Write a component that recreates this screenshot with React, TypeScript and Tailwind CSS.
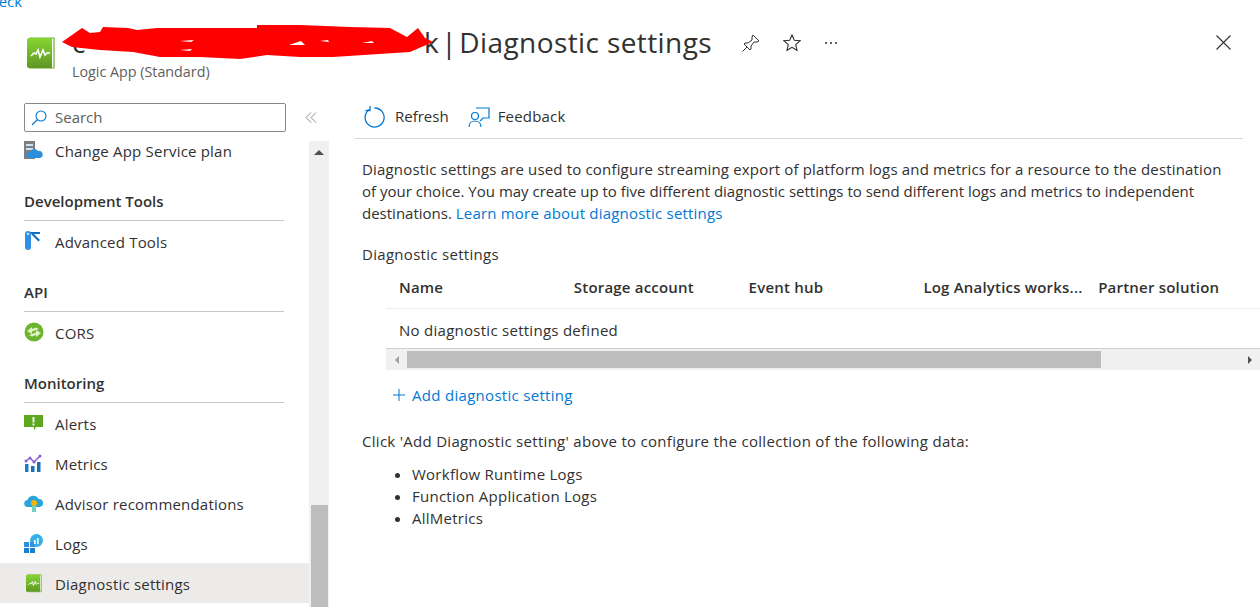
import React from 'react';

const font = { fontFamily: '"Open Sans", "Noto Sans", sans-serif' };

function BookIcon({ small }: { small?: boolean }) {
  return (
    <svg width={small ? 16 : 28} height={small ? 19 : 33} viewBox="0 0 28 33">
      <defs>
        <linearGradient id={small ? 'bookS' : 'bookL'} x1="0" y1="0" x2="0" y2="1">
          <stop offset="0" stopColor="#86d633" />
          <stop offset="1" stopColor="#5e9624" />
        </linearGradient>
      </defs>
      <path d="M3 1h24v30H3z" fill="#fff" stroke="#6fae2c" strokeWidth="1.2" />
      <path d="M0 3a2 2 0 0 1 2-2h23v30H2a2 2 0 0 1-2-2z" fill={`url(#${small ? 'bookS' : 'bookL'})`} />
      <path d="M4 19l3-3 2 1 2-4 2 7 3-7 2 5 2-2h3" fill="none" stroke="#fff" strokeWidth="1.6" />
    </svg>
  );
}

function PlanIcon() {
  return (
    <svg width="19" height="18" viewBox="0 0 19 18">
      <rect x="0" y="0" width="11" height="18" fill="#7a7f85" />
      <rect x="2" y="3" width="7" height="2" fill="#cfe3f5" />
      <rect x="2" y="7" width="7" height="2" fill="#cfe3f5" />
      <path d="M5 17a3 3 0 0 1 1-6 4.500 4.500 0 0 1 8-1 3.600 3.600 0 0 1 2 7z" fill="#2b8fdc" />
    </svg>
  );
}

function ToolsIcon() {
  return (
    <svg width="17" height="20" viewBox="0 0 17 20">
      <rect x="1" y="0" width="6" height="19" rx="3" fill="#2f8fe6" />
      <circle cx="4" cy="3" r="1.300" fill="#bfe0fa" />
      <path d="M6 1h10v2H10l6 6-1.500 1.500L8 4z" fill="#0f6fc6" />
    </svg>
  );
}

function CorsIcon() {
  return (
    <svg width="20" height="20" viewBox="0 0 20 20">
      <circle cx="10" cy="10" r="9.500" fill="#6bb52f" />
      <path d="M3 9l5-4v2l4-1.500L15 7l-7 2.500V12z" fill="#dff2c8" />
      <path d="M17 11l-5 4v-2l-4 1.500L5 13l7-2.500V8z" fill="#dff2c8" />
    </svg>
  );
}

function AlertIcon() {
  return (
    <svg width="19" height="16" viewBox="0 0 19 16">
      <path d="M0 0h19v12h-7l-2 3.500V12H0z" fill="#5ea821" />
      <rect x="8.500" y="2" width="2" height="5.500" fill="#e9f5dc" />
      <rect x="8.500" y="8.500" width="2" height="2" fill="#e9f5dc" />
    </svg>
  );
}

function MetricsIcon() {
  return (
    <svg width="18" height="18" viewBox="0 0 18 18">
      <rect x="1" y="10" width="3.500" height="8" fill="#1b7fc4" />
      <rect x="7" y="12" width="3.500" height="6" fill="#1b6fb4" />
      <rect x="13" y="8" width="3.500" height="10" fill="#1b6fb4" />
      <path d="M2 7l4-3 4 4 6-6" fill="none" stroke="#8a5fd6" strokeWidth="1.500" />
      <circle cx="2" cy="7" r="1.500" fill="#8a5fd6" />
      <circle cx="6" cy="4" r="1.500" fill="#8a5fd6" />
      <circle cx="10" cy="8" r="1.500" fill="#8a5fd6" />
      <circle cx="16" cy="2" r="1.500" fill="#8a5fd6" />
    </svg>
  );
}

function AdvisorIcon() {
  return (
    <svg width="19" height="17" viewBox="0 0 19 17">
      <path d="M4 12a3.500 3.500 0 0 1-.5-7 6 6 0 0 1 11-1 4 4 0 0 1 1 8z" fill="#2aa5dc" />
      <rect x="8" y="11" width="4" height="6" fill="#6fd0c4" />
      <circle cx="10" cy="8" r="3" fill="#f5b400" />
    </svg>
  );
}

function LogsIcon() {
  return (
    <svg width="19" height="19" viewBox="0 0 19 19">
      <rect x="0" y="8" width="5" height="5" fill="#2f8fe0" />
      <rect x="0" y="14" width="5" height="5" fill="#1b7fd0" />
      <rect x="6" y="14" width="5" height="5" fill="#1b7fd0" />
      <circle cx="12.500" cy="6.500" r="6.500" fill="#35b0e6" />
      <rect x="6" y="8" width="5" height="5" fill="#2f8fe0" />
      <rect x="10" y="6" width="1.600" height="4" fill="#fff" />
      <rect x="13" y="4" width="1.600" height="6" fill="#fff" />
    </svg>
  );
}

function NavItem({ icon, label, active }: { icon: React.ReactNode; label: string; active?: boolean }) {
  return (
    <div className={`flex items-center h-10 pl-6 ${active ? 'bg-[#edebe9]' : ''}`}>
      <span className="w-[31px] flex items-center">{icon}</span>
      <span className="text-[15px] tracking-[0.2px] text-[#323130] pt-[2px]">{label}</span>
    </div>
  );
}

function NavHeading({ label }: { label: string }) {
  return (
    <div className="mx-6 w-[260px] h-[29px] border-b border-[#c8c6c4] text-[15px] font-semibold text-[#323130] leading-[18px] mt-[22px]">
      {label}
    </div>
  );
}

export default function App() {
  const columns = ['Name', 'Storage account', 'Event hub', 'Log Analytics works...', 'Partner solution'];

  return (
    <div className="w-[1260px] h-[607px] overflow-hidden bg-white flex flex-col text-[#323130]" style={font}>
      {/* cut-off link from the blade behind */}
      <div className="h-2.5 overflow-hidden">
        <div className="-ml-[20px] -mt-[9px] text-[15px] leading-5 text-[#0078d4]">Check</div>
      </div>

      <div className="h-[90px] flex">
        <div className="pl-[27px] pt-[27px]">
          <BookIcon />
        </div>
        <div className="pl-[17px] pt-[13px] w-[1150px]">
          <div className="relative flex items-center h-[40px]">
            <span className="text-[28px] tracking-[0.4px] text-[#323130] w-[352px] -mt-[3px]">c</span>
            <span className="text-[28px] tracking-[0.4px] text-[#323130] w-[288px] whitespace-nowrap flex -mt-[3px]">
              <span className="w-[18px]">k</span>
              <span className="w-[15px]">|</span>
              <span className="ml-[3px]">Diagnostic settings</span>
            </span>
            <svg className="absolute -left-[10px] top-[2px]" width="375" height="34" viewBox="0 0 375 34">
              <path
                d="M0 17L20 3l8 5 10-1 3-5 25 1 9 2 20-2 100 0 0-3 43 0 50 2 40 1 17 9 11-9 7 10 8 4-23 10-77 5-33 0-33-2-27 4-40-2-40 0-27-5-33-2-28-3z"
                fill="#ff0000"
              />
              <path d="M118 16l14-1-3 2zM118 25l12-1-2 2zM227 20l12-4 4 4zM258 16l8-1 1 2zM300 18l10-2 2 2z" fill="#ffffff" />
            </svg>
            <span className="flex items-center gap-[22px] pl-[29px]">
              <svg width="20" height="20" viewBox="0 0 20 20" fill="none" stroke="#323130" strokeWidth="1">
                <path d="M12 2l6 6-2 1-3 0-3 4v3l-1 1-6-6 1-1h3l4-3V4z" />
                <path d="M6 14l-4.500 4.500" />
              </svg>
              <svg width="18" height="18" viewBox="0 0 18 18" fill="none" stroke="#323130" strokeWidth="1.100">
                <path d="M9 1l2.300 5.300 5.700.5-4.300 3.800 1.300 5.700L9 13.300l-5 3 1.300-5.700L1 6.800l5.700-.5z" />
              </svg>
              <span className="flex gap-[3px] pl-[2px]">
                <i className="w-[2px] h-[2px] bg-[#605e5c]" />
                <i className="w-[2px] h-[2px] bg-[#605e5c]" />
                <i className="w-[2px] h-[2px] bg-[#605e5c]" />
              </span>
            </span>
            <svg className="absolute left-[1144px] top-[12px]" width="15" height="15" viewBox="0 0 15 15" stroke="#323130" strokeWidth="1.100">
              <path d="M0.500 0.500l14 14M14.500 0.500l-14 14" />
            </svg>
          </div>
          <div className="text-[14.300px] leading-[20px] text-[#605e5c] -mt-[1px]">Logic App (Standard)</div>
        </div>
      </div>

      <div className="flex flex-1 min-h-0">
        <aside className="w-[329px] shrink-0 flex flex-col">
          <div className="h-[41px] flex items-start pl-6 pt-[3px] shrink-0">
            <div className="w-[262px] h-[29px] border border-[#8a8886] rounded-[2px] flex items-center pl-[6px]">
              <svg width="16" height="16" viewBox="0 0 16 16" fill="none" stroke="#0078d4" strokeWidth="1.100">
                <circle cx="10" cy="6" r="5" />
                <path d="M6.500 9.500L1 15" />
              </svg>
              <span className="ml-[8px] -mt-[1px] text-[15px] text-[#605e5c]">Search</span>
            </div>
            <svg className="ml-[19px] mt-[9px]" width="12" height="11" viewBox="0 0 12 11" fill="none" stroke="#8a8886" strokeWidth="1">
              <path d="M6 0.500l-5 5 5 5M11 0.500l-5 5 5 5" />
            </svg>
          </div>
          <div className="flex flex-1 min-h-0">
            <nav className="w-[309px] shrink-0 overflow-hidden -mt-[10px]">
              <div className="-mt-px">
                <NavItem icon={<PlanIcon />} label="Change App Service plan" />
              </div>
              <NavHeading label="Development Tools" />
              <NavItem icon={<ToolsIcon />} label="Advanced Tools" />
              <NavHeading label="API" />
              <NavItem icon={<CorsIcon />} label="CORS" />
              <NavHeading label="Monitoring" />
              <NavItem icon={<AlertIcon />} label="Alerts" />
              <NavItem icon={<MetricsIcon />} label="Metrics" />
              <NavItem icon={<AdvisorIcon />} label="Advisor recommendations" />
              <NavItem icon={<LogsIcon />} label="Logs" />
              <NavItem icon={<span className="pl-[2px] flex"><BookIcon small /></span>} label="Diagnostic settings" active />
            </nav>
            <div className="w-[20px] bg-[#f0f0f0] flex flex-col items-center pt-[9px]">
              <div className="w-0 h-0 border-x-[5px] border-x-transparent border-b-[5px] border-b-[#505050]" />
              <div className="mt-auto w-[17px] h-[102px] bg-[#bdbdbd]" />
            </div>
          </div>
        </aside>

        <main className="flex-1 min-w-0 pl-[26px]">
          <div className="h-[39px] w-[888px] border-b border-[#d6d6d6] flex items-center text-[15px] pb-[4px]">
            <svg className="ml-[9px]" width="22" height="22" viewBox="0 0 22 22" fill="none" stroke="#0078d4" strokeWidth="1.300">
              <path d="M5.500 3.500a9.500 9.500 0 1 0 5-1.500" />
              <path d="M6 0v4.500H1.500" />
            </svg>
            <span className="ml-[9px] -mt-[1px]">Refresh</span>
            <svg className="ml-[19px]" width="22" height="22" viewBox="0 0 22 22" fill="none" stroke="#0078d4" strokeWidth="1.200">
              <circle cx="7" cy="10" r="3.500" />
              <path d="M1 21c0-4 3-6 6-6s6 2 6 6" />
              <path d="M8 2h13v10h-6l-3 3" />
            </svg>
            <span className="ml-[8px] -mt-[1px] tracking-[0.2px]">Feedback</span>
          </div>

          <div className="pl-[7px] text-[15px] leading-[22px]">
            <div className="pt-[19px] whitespace-nowrap">
              <p className="tracking-[0.17px]">Diagnostic settings are used to configure streaming export of platform logs and metrics for a resource to the destination</p>
              <p>of your choice. You may create up to five different diagnostic settings to send different logs and metrics to independent</p>
              <p>
                destinations. <span className="text-[#0078d4] tracking-[0.2px]">Learn more about diagnostic settings</span>
              </p>
            </div>
            <div className="mt-[19px] tracking-[0.3px]">Diagnostic settings</div>
          </div>

          <div className="ml-[31px]">
            <div className="flex h-[44px] items-center pt-[1px] border-b border-[#edebe9] text-[15px] font-semibold tracking-[0.2px]">
              {columns.map((c) => (
                <div key={c} className="w-[175px] pl-[13px] whitespace-nowrap">{c}</div>
              ))}
            </div>
            <div className="h-[39px] flex items-center pl-[13px] pt-[3px] text-[15px] tracking-[0.27px]">No diagnostic settings defined</div>
            <div className="h-[22px] bg-[#f0f0f0] border-t border-[#d0d0d0] flex items-center">
              <div className="w-[21px] flex justify-center">
                <div className="w-0 h-0 border-y-[4px] border-y-transparent border-r-[4px] border-r-[#a0a0a0]" />
              </div>
              <div className="w-[694px] h-[17px] bg-[#bdbdbd]" />
              <div className="ml-auto w-[20px] flex justify-center">
                <div className="w-0 h-0 border-y-[4px] border-y-transparent border-l-[4px] border-l-[#505050]" />
              </div>
            </div>
          </div>

          <div className="flex items-center h-[20px] mt-[15px] ml-[38px] text-[15px] tracking-[0.3px] text-[#0078d4]">
            <svg width="12" height="12" viewBox="0 0 12 12" stroke="#0078d4" strokeWidth="1">
              <path d="M6 0v12M0 6h12" />
            </svg>
            <span className="ml-[7px]">Add diagnostic setting</span>
          </div>

          <div className="pl-[7px] text-[15px] leading-[22px]">
            <p className="mt-[25px] tracking-[0.29px]">Click 'Add Diagnostic setting' above to configure the collection of the following data:</p>
            <ul className="mt-[11px] list-disc pl-[50px] tracking-[0.25px]">
              <li>Workflow Runtime Logs</li>
              <li>Function Application Logs</li>
              <li>AllMetrics</li>
            </ul>
          </div>
        </main>
      </div>
    </div>
  );
}
